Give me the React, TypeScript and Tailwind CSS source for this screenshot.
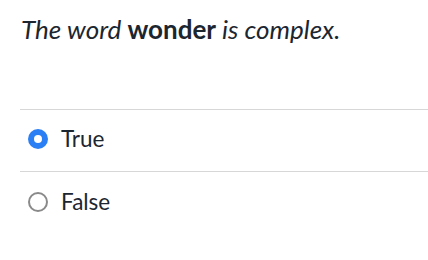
import React from "react";

function Radio({ checked }: { checked: boolean }) {
  return checked ? (
    <span className="w-[20px] h-[20px] rounded-full bg-[#2b7ff5] flex items-center justify-center shrink-0">
      <span className="w-[8px] h-[8px] rounded-full bg-white" />
    </span>
  ) : (
    <span className="w-[20px] h-[20px] rounded-full border-[2.5px] border-[#8a8a8a] bg-white shrink-0" />
  );
}

export default function App() {
  return (
    <div className="w-[428px] h-[260px] bg-white font-['Lato',sans-serif] text-[#1c2630]">
      <div className="pl-[21px] pt-[10px] h-[109px] text-[26px] leading-[38px]">
        <span className="italic">The word </span>
        <span className="font-bold">wonder</span>
        <span className="italic"> is complex.</span>
      </div>
      <div className="ml-[20px] border-t border-[#d7d7d7]">
        <div className="h-[61px] flex items-center gap-[13px] pl-[8px] pb-[3px] text-[22.5px]">
          <Radio checked />
          <span>True</span>
        </div>
        <div className="border-t border-[#d7d7d7] h-[62px] flex items-center gap-[13px] pl-[8px] pb-[2px] text-[22.5px]">
          <Radio checked={false} />
          <span>False</span>
        </div>
      </div>
    </div>
  );
}
